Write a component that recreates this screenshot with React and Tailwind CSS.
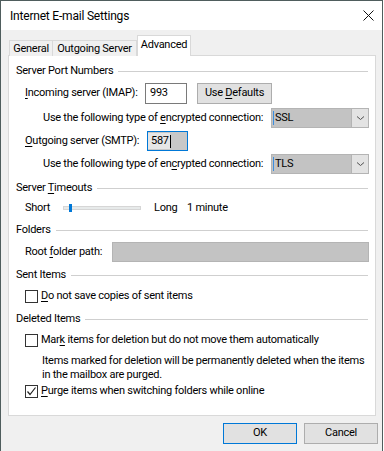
import React from 'react';

const font = { fontFamily: 'Roboto, "Segoe UI", Arial, sans-serif' };

function U({ children }) {
  return <span className="underline decoration-1 underline-offset-[2px]">{children}</span>;
}

function Group({ children, className = '' }) {
  return (
    <div className={`flex items-center h-[16px] pl-[7px] pr-[7px] ${className}`}>
      <span>{children}</span>
      <div className="flex-1 ml-[5px] mt-[1px] border-t border-[#cfcfcf]" />
    </div>
  );
}

function Combo({ value }) {
  return (
    <div className="w-[98px] h-[20px] border border-[#b4b4b4] bg-[#c3c3c3] flex">
      <div className="flex-1 flex items-center">
        <div className="w-[1px] h-[14px] bg-[#3b8ee0] ml-[1px]" />
        <span className="ml-[1px]">{value}</span>
      </div>
      <div className="w-[17px] border-l border-[#b4b4b4] bg-[#e3e3e3] flex items-center justify-center">
        <svg width="9" height="6" viewBox="0 0 9 6">
          <path d="M1 1.5 L4.5 4.5 L8 1.5" fill="none" stroke="#505050" strokeWidth="1" />
        </svg>
      </div>
    </div>
  );
}

function Check({ checked }) {
  return (
    <div className="w-[13px] h-[13px] border border-[#333] bg-white flex items-center justify-center">
      {checked && (
        <svg width="11" height="11" viewBox="0 0 11 11">
          <path d="M1.5 5.5 L4 8.5 L9.5 1.5" fill="none" stroke="#222" strokeWidth="1.2" />
        </svg>
      )}
    </div>
  );
}

export default function App() {
  return (
    <div
      className="w-[383px] h-[451px] border-l border-t border-r border-[#4f5d5d] bg-[#f0f0f0] flex flex-col text-[11px] tracking-[-0.25px] text-black overflow-hidden"
      style={font}
    >
      {/* title bar */}
      <div className="h-[29px] bg-white flex items-center pl-[9px] pr-[8px] shrink-0">
        <span className="text-[12px] tracking-[-0.2px]">Internet E-mail Settings</span>
        <div className="flex-1" />
        <svg width="11" height="11" viewBox="0 0 11 11">
          <path d="M0.5 0.5 L10.5 10.5 M10.5 0.5 L0.5 10.5" stroke="#111" strokeWidth="1" />
        </svg>
      </div>

      {/* tabs */}
      <div className="h-[26px] flex items-end pl-[8px] shrink-0 relative z-10">
        <div className="w-[44px] h-[16px] border border-b-0 border-[#d9d9d9] bg-[#f0f0f0] flex items-center justify-center pt-[1px]">
          General
        </div>
        <div className="w-[84px] h-[16px] border border-b-0 border-l-0 border-[#d9d9d9] bg-[#f0f0f0] flex items-center justify-center pt-[1px]">
          Outgoing Server
        </div>
        <div className="w-[54px] h-[21px] border border-b-0 border-[#d9d9d9] bg-white flex items-center justify-center pb-[2px]">
          Advanced
        </div>
      </div>

      {/* panel */}
      <div className="ml-[7px] w-[368px] h-[361px] -mt-[1px] border border-[#d9d9d9] bg-white pt-[7px] shrink-0">
        <Group>Server Port Numbers</Group>

        <div className="mt-[4px] h-[21px] flex items-center pl-[16px]">
          <span className="w-[120px]"><U>I</U>ncoming server (IMAP):</span>
          <div className="w-[42px] h-[21px] border border-[#7a7a7a] flex items-center pl-[4px]">993</div>
          <div className="ml-[10px] w-[75px] h-[21px] border border-[#adadad] bg-[#e1e1e1] flex items-center justify-center">
            <span>Use <U>D</U>efaults</span>
          </div>
        </div>

        <div className="mt-[4px] h-[20px] flex items-center pl-[34px]">
          <span className="w-[228px]">Use the following type of <U>e</U>ncrypted connection:</span>
          <Combo value="SSL" />
        </div>

        <div className="mt-[3px] h-[20px] flex items-center pl-[16px]">
          <span className="w-[122px]"><U>O</U>utgoing server (SMTP):</span>
          <div className="w-[41px] h-[20px] border border-[#0078d7] bg-[#c8c8c8] flex items-center">
            <span className="pl-[3px] pr-[1px] bg-[#e6e6e6] h-[16px] flex items-center">587</span>
            <div className="w-[1px] h-[13px] bg-black" />
          </div>
        </div>

        <div className="mt-[3px] h-[20px] flex items-center pl-[34px]">
          <span className="w-[228px]">Use the following type of en<U>c</U>rypted connection:</span>
          <Combo value="TLS" />
        </div>

        <Group className="mt-[6px]">Server <U>T</U>imeouts</Group>

        <div className="mt-[4px] h-[16px] flex items-center pl-[16px]">
          <span className="w-[38px]">Short</span>
          <div className="relative w-[78px] h-[4px] border border-[#d6d6d6] bg-[#e7eaea]">
            <div className="absolute left-[5px] -top-[3px] w-[3px] h-[8px] bg-[#0078d7]" />
          </div>
          <span className="ml-[13px] w-[33px]">Long</span>
          <span>1 minute</span>
        </div>

        <Group className="mt-[6px]">Folders</Group>

        <div className="mt-[4px] h-[20px] flex items-center pl-[16px]">
          <span className="w-[87px]">Root <U>f</U>older path:</span>
          <div className="w-[257px] h-[20px] border border-[#b4b4b4] bg-[#c3c3c3]" />
        </div>

        <Group className="mt-[5px]">Sent Items</Group>

        <div className="mt-[5px] h-[16px] flex items-center pl-[16px]">
          <Check />
          <span className="ml-[3px]"><U>D</U>o not save copies of sent items</span>
        </div>

        <Group className="mt-[7px]">Deleted Items</Group>

        <div className="mt-[5px] h-[16px] flex items-center pl-[16px]">
          <Check />
          <span className="ml-[3px]">Mar<U>k</U> items for deletion but do not move them automatically</span>
        </div>

        <div className="mt-[6px] pl-[33px] leading-[14px]">
          <div>Items marked for deletion will be permanently deleted when the items</div>
          <div>in the mailbox are purged.</div>
        </div>

        <div className="mt-[1px] h-[16px] flex items-center pl-[16px]">
          <Check checked />
          <span className="ml-[3px]"><U>P</U>urge items when switching folders while online</span>
        </div>
      </div>

      {/* buttons */}
      <div className="mt-[7px] h-[21px] flex justify-end pr-[4px] gap-[7px] shrink-0">
        <div className="w-[74px] h-[21px] border border-[#0078d7] bg-[#e1e1e1] flex items-center justify-center">
          OK
        </div>
        <div className="w-[74px] h-[21px] border border-[#adadad] bg-[#e1e1e1] flex items-center justify-center">
          Cancel
        </div>
      </div>
    </div>
  );
}
